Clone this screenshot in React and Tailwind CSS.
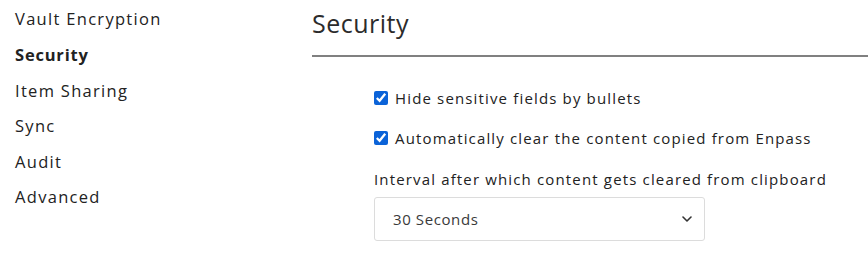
export default function App() {
  const nav = ["Vault Encryption", "Security", "Item Sharing", "Sync", "Audit", "Advanced"];
  const font = { fontFamily: "'Open Sans', 'Noto Sans', sans-serif" };
  return (
    <div className="flex w-[868px] h-[253px] bg-white text-[#222222] overflow-hidden" style={font}>
      <div className="w-[312px] shrink-0 pl-[15px] pt-[2px] flex flex-col">
        {nav.map((n) => (
          <div
            key={n}
            className={`h-[35.6px] flex items-center text-[16.5px] ${n === "Security" ? "font-bold tracking-[0.8px]" : "font-medium tracking-[1.3px]"}`}
          >
            {n}
          </div>
        ))}
      </div>
      <div className="flex-1 flex flex-col">
        <div className="h-[55px] flex items-center text-[25px] tracking-[0.5px] text-[#2b2b2b] pb-[8px]">
          Security
        </div>
        <div className="h-[2px] bg-[#808080]" />
        <div className="pl-[62px] pt-[31px] flex flex-col text-[15px] font-medium tracking-[1.15px]">
          <label className="flex items-center gap-[7px] h-[20px]">
            <input type="checkbox" defaultChecked className="w-[14px] h-[14px] m-0 accent-[#0b63d8]" />
            <span>Hide sensitive fields by bullets</span>
          </label>
          <label className="flex items-center gap-[7px] h-[20px] mt-[20px]">
            <input type="checkbox" defaultChecked className="w-[14px] h-[14px] m-0 accent-[#0b63d8]" />
            <span>Automatically clear the content copied from Enpass</span>
          </label>
          <div className="mt-[21px] h-[20px] flex items-center">Interval after which content gets cleared from clipboard</div>
          <div className="mt-[8px] w-[331px] h-[44px] border border-[#dcdcdc] rounded-[3px] flex items-center justify-between pl-[18px] pr-[12px] text-[#3a3a3a] tracking-[0.6px]">
            <span>30 Seconds</span>
            <svg width="10" height="6" viewBox="0 0 10 6" fill="none">
              <path d="M1 1l4 4 4-4" stroke="#333" strokeWidth="1.6" strokeLinecap="round" strokeLinejoin="round" />
            </svg>
          </div>
        </div>
      </div>
    </div>
  );
}
